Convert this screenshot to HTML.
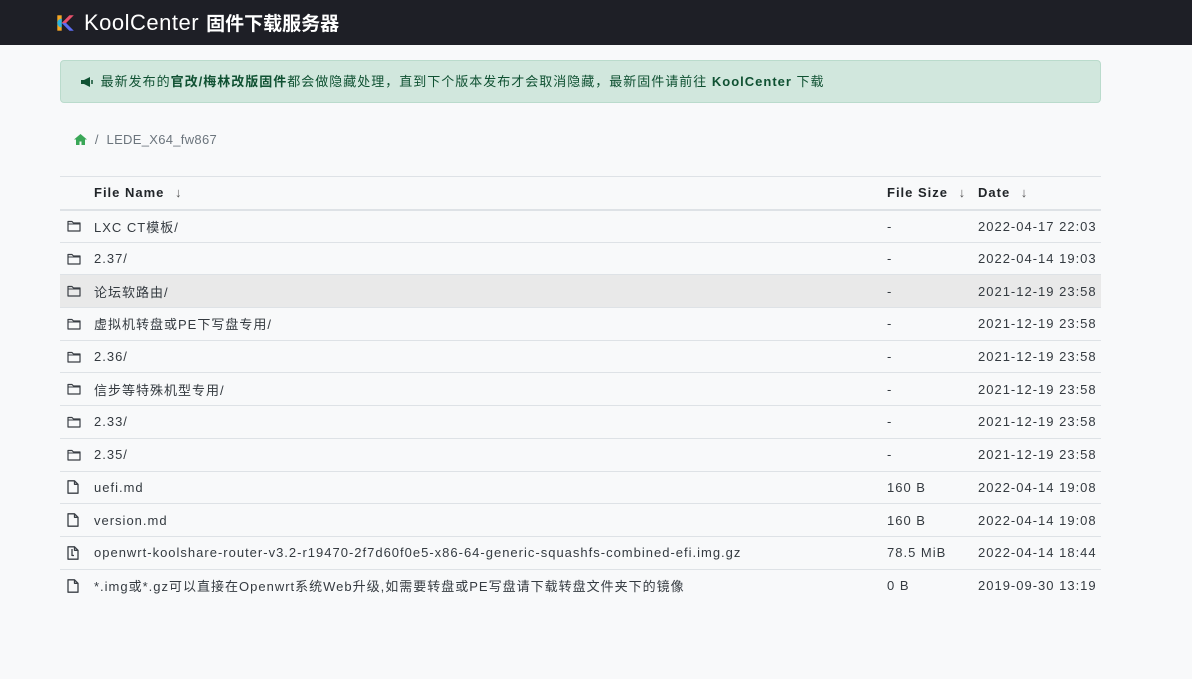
<!DOCTYPE html>
<html><head><meta charset="utf-8"><style>
*{box-sizing:border-box;margin:0;padding:0}
body{width:1192px;height:679px;background:#f8f9fa;font-family:"Liberation Sans","Noto Sans CJK SC",sans-serif;color:#212529;overflow:hidden}
.hd{height:45px;background:#1e1f26;display:flex;align-items:center;padding-left:54px;color:#fff}
.hd .t{font-size:22px;margin-left:8px;letter-spacing:.5px}
.hd b{font-size:19px;margin-left:7px;font-weight:700;letter-spacing:0}
.al{position:absolute;left:60px;top:60px;width:1041px;height:43px;background:#d1e7dd;border:1px solid #badbcc;border-radius:4px;color:#0f5132;font-size:13px;line-height:41px;padding-left:19px;letter-spacing:1px}
.al svg{vertical-align:-2px;margin-right:2px}
.bc{position:absolute;left:74px;top:132px;font-size:13px;color:#6c757d;letter-spacing:.3px}
.bc svg{vertical-align:-1px}
table{position:absolute;left:60px;top:176px;width:1041px;border-collapse:collapse;font-size:13px;letter-spacing:1px}
th{text-align:left;height:33px;border-top:1px solid #dee2e6;border-bottom:2px solid #dee2e6;font-weight:700;letter-spacing:1px}
td{height:32.7px;border-bottom:1px solid #dee2e6;color:#343a40}
tr.h td{background:#e9e9e9}
.ic{width:34px;padding-left:7px}
.ic svg{display:block}
.s{width:91px}.d{width:123px}
.ar{color:#555;font-weight:400;margin-left:6px}
</style></head><body>
<svg width="0" height="0" style="position:absolute"><defs>
<symbol id="fo" viewBox="0 0 14 12"><path d="M1 1.5h4l1.5 1.5H13v8H1z" fill="none" stroke="#3a3f45" stroke-width="1.2" stroke-linejoin="round"/><path d="M1 4h12" stroke="#3a3f45" stroke-width="1"/></symbol>
<symbol id="fi" viewBox="0 0 12 14"><path d="M1 .8h6.5L11 4.3v8.9H1z M7.5 .8v3.5H11" fill="none" stroke="#3a3f45" stroke-width="1.3" stroke-linejoin="round"/></symbol>
</defs></svg>
<div class="hd"><svg width="22" height="22" viewBox="0 0 20 20"><path d="M3 3h4v14H3z" fill="#f5a623"/><path d="M7 10l7-7h4l-7 7z" fill="#e9506b"/><path d="M7 10l7 7h4l-7-7z" fill="#5b6cf0"/><path d="M3 10a4 4 0 0 1 4-4v8a4 4 0 0 1-4-4z" fill="#2bb5e0"/></svg><span class="t">KoolCenter</span><b>固件下载服务器</b></div>
<div class="al"><svg width="14" height="12" viewBox="0 0 14 12"><path d="M1 4h3l6-3v10l-6-3H1z" fill="#0f5132"/><path d="M12 4v4" stroke="#0f5132" stroke-width="1.5"/></svg> 最新发布的<b>官改/梅林改版固件</b>都会做隐藏处理，直到下个版本发布才会取消隐藏，最新固件请前往 <b>KoolCenter</b> 下载</div>
<div class="bc"><svg width="13" height="11" viewBox="0 0 13 11"><path d="M6.5 0L0 5.5h2V11h3.5V7.5h2V11H11V5.5h2z" fill="#3aa757"/></svg>&nbsp; / &nbsp;LEDE_X64_fw867</div>
<table>
<tr><th class="ic"></th><th>File Name <span class="ar">↓</span></th><th class="s">File Size <span class="ar">↓</span></th><th class="d">Date <span class="ar">↓</span></th></tr>
<tr><td class="ic"><svg width="14" height="12"><use href="#fo"/></svg></td><td>LXC CT模板/</td><td>-</td><td>2022-04-17 22:03</td></tr>
<tr><td class="ic"><svg width="14" height="12"><use href="#fo"/></svg></td><td>2.37/</td><td>-</td><td>2022-04-14 19:03</td></tr>
<tr class="h"><td class="ic"><svg width="14" height="12"><use href="#fo"/></svg></td><td>论坛软路由/</td><td>-</td><td>2021-12-19 23:58</td></tr>
<tr><td class="ic"><svg width="14" height="12"><use href="#fo"/></svg></td><td>虚拟机转盘或PE下写盘专用/</td><td>-</td><td>2021-12-19 23:58</td></tr>
<tr><td class="ic"><svg width="14" height="12"><use href="#fo"/></svg></td><td>2.36/</td><td>-</td><td>2021-12-19 23:58</td></tr>
<tr><td class="ic"><svg width="14" height="12"><use href="#fo"/></svg></td><td>信步等特殊机型专用/</td><td>-</td><td>2021-12-19 23:58</td></tr>
<tr><td class="ic"><svg width="14" height="12"><use href="#fo"/></svg></td><td>2.33/</td><td>-</td><td>2021-12-19 23:58</td></tr>
<tr><td class="ic"><svg width="14" height="12"><use href="#fo"/></svg></td><td>2.35/</td><td>-</td><td>2021-12-19 23:58</td></tr>
<tr><td class="ic"><svg width="12" height="14"><use href="#fi"/></svg></td><td>uefi.md</td><td>160 B</td><td>2022-04-14 19:08</td></tr>
<tr><td class="ic"><svg width="12" height="14"><use href="#fi"/></svg></td><td>version.md</td><td>160 B</td><td>2022-04-14 19:08</td></tr>
<tr><td class="ic"><svg width="12" height="14"><use href="#fi"/><path d="M5 3v7M5 9.5h2" stroke="#3a3f45" stroke-width="1.3"/></svg></td><td>openwrt-koolshare-router-v3.2-r19470-2f7d60f0e5-x86-64-generic-squashfs-combined-efi.img.gz</td><td>78.5 MiB</td><td>2022-04-14 18:44</td></tr>
<tr><td class="ic" style="border:0"><svg width="12" height="14"><use href="#fi"/></svg></td><td style="border:0">*.img或*.gz可以直接在Openwrt系统Web升级,如需要转盘或PE写盘请下载转盘文件夹下的镜像</td><td style="border:0">0 B</td><td style="border:0">2019-09-30 13:19</td></tr>
</table>
</body></html>
